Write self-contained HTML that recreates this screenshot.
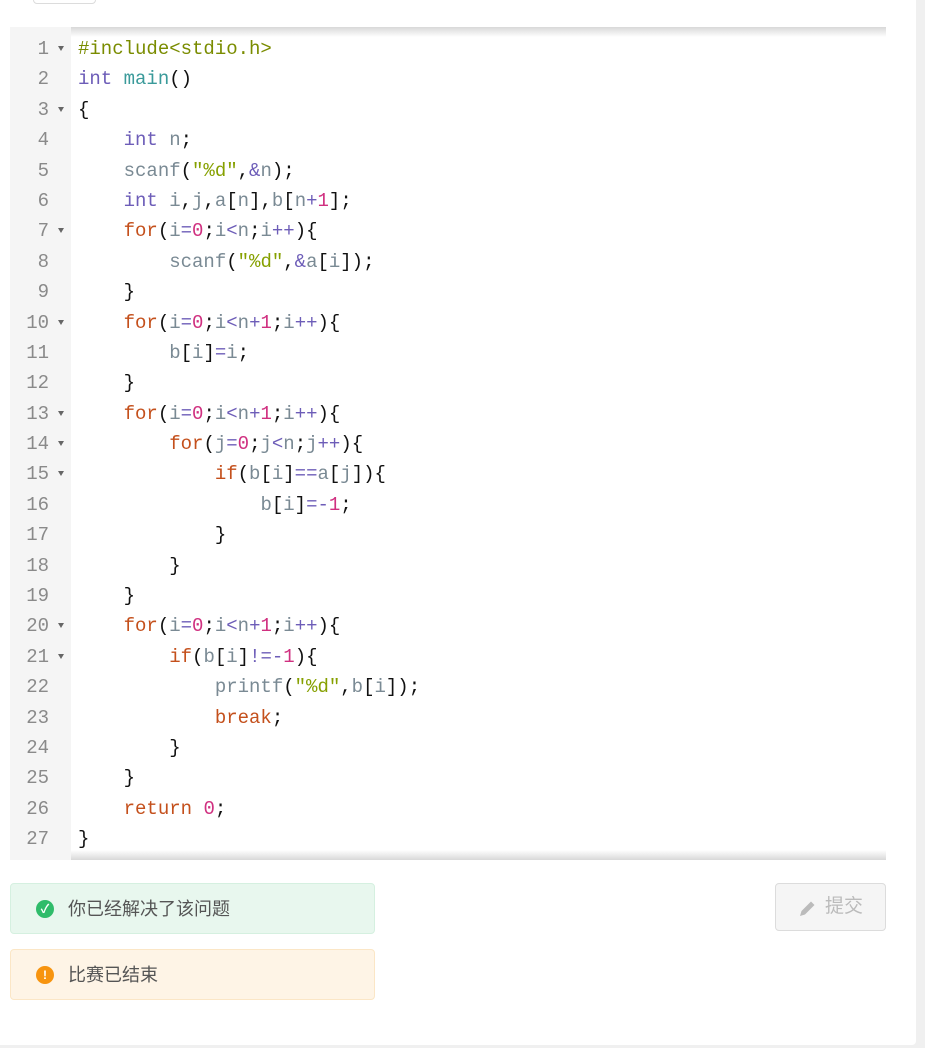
<!DOCTYPE html>
<html><head><meta charset="utf-8"><style>
*{margin:0;padding:0;box-sizing:border-box}
body{width:925px;height:1048px;background:#f0f0f0;position:relative;overflow:hidden;font-family:"Liberation Sans","Noto Sans CJK SC",sans-serif}
.card{position:absolute;left:0;top:0;width:916px;height:1045px;background:#fff;border-radius:0 0 4px 0}
.topbtn{position:absolute;left:33px;top:-6px;width:63px;height:10px;border:1px solid #dcdcdc;border-radius:4px;background:#fff}
.ed{position:absolute;left:10px;top:27px;width:876px;height:833px;background:#fff;overflow:hidden}
.gut{position:absolute;left:0;top:0;width:61px;height:100%;background:#f5f5f5}
.sh{position:absolute;left:0;right:0;height:10px}
.sht{top:0;background:linear-gradient(#d8d8d8,rgba(255,255,255,0))}
.shb{bottom:0;background:linear-gradient(rgba(255,255,255,0),#d8d8d8)}
.lines{position:absolute;left:0;top:7px;font-family:"Liberation Mono",monospace;font-size:19px}
.l{height:30.4px;line-height:30.4px;position:relative;white-space:pre}
.n{position:absolute;left:0;width:39px;text-align:right;color:#8a8a8a}
.a{position:absolute;left:48px;top:12px;width:0;height:0;border-left:3.5px solid transparent;border-right:3.5px solid transparent;border-top:5px solid #666}
.c{position:absolute;left:68px;color:#111}
.p{color:#7a8c00}.t{color:#6d5db8}.f{color:#3a9a9a}.k{color:#c4501c}.v{color:#7a8a94}.o{color:#6d5db8}.d{color:#d03080}.s{color:#86a000}
.al{position:absolute;left:10px;width:365px;height:51px;border-radius:4px;font-size:18px;color:#555;line-height:51px;padding-left:57px}
.ok{top:883px;background:#e8f7ee;border:1px solid #d5f0e0}
.wa{top:949px;background:#fef4e6;border:1px solid #fbe6c6}
.ic{position:absolute;left:25px;top:16px;width:18px;height:18px;border-radius:50%;color:#fff;font-size:12px;line-height:18px;text-align:center;font-weight:bold}
.btn{position:absolute;left:775px;top:883px;width:111px;height:48px;border:1px solid #dcdcdc;border-radius:4px;background:#f5f5f5;color:#bbb;font-size:19px;line-height:46px;padding-left:49px}
</style></head><body>
<div class="card">
<div class="topbtn"></div>
<div class="ed"><div class="gut"></div>
<div class="lines">
<div class="l"><span class="n">1</span><span class="a"></span><span class="c"><span class="p">#include&lt;stdio.h&gt;</span></span></div>
<div class="l"><span class="n">2</span><span class="c"><span class="t">int</span> <span class="f">main</span>()</span></div>
<div class="l"><span class="n">3</span><span class="a"></span><span class="c">{</span></div>
<div class="l"><span class="n">4</span><span class="c">    <span class="t">int</span> <span class="v">n</span>;</span></div>
<div class="l"><span class="n">5</span><span class="c">    <span class="v">scanf</span>(<span class="s">"%d"</span>,<span class="o">&amp;</span><span class="v">n</span>);</span></div>
<div class="l"><span class="n">6</span><span class="c">    <span class="t">int</span> <span class="v">i</span>,<span class="v">j</span>,<span class="v">a</span>[<span class="v">n</span>],<span class="v">b</span>[<span class="v">n</span><span class="o">+</span><span class="d">1</span>];</span></div>
<div class="l"><span class="n">7</span><span class="a"></span><span class="c">    <span class="k">for</span>(<span class="v">i</span><span class="o">=</span><span class="d">0</span>;<span class="v">i</span><span class="o">&lt;</span><span class="v">n</span>;<span class="v">i</span><span class="o">++</span>){</span></div>
<div class="l"><span class="n">8</span><span class="c">        <span class="v">scanf</span>(<span class="s">"%d"</span>,<span class="o">&amp;</span><span class="v">a</span>[<span class="v">i</span>]);</span></div>
<div class="l"><span class="n">9</span><span class="c">    }</span></div>
<div class="l"><span class="n">10</span><span class="a"></span><span class="c">    <span class="k">for</span>(<span class="v">i</span><span class="o">=</span><span class="d">0</span>;<span class="v">i</span><span class="o">&lt;</span><span class="v">n</span><span class="o">+</span><span class="d">1</span>;<span class="v">i</span><span class="o">++</span>){</span></div>
<div class="l"><span class="n">11</span><span class="c">        <span class="v">b</span>[<span class="v">i</span>]<span class="o">=</span><span class="v">i</span>;</span></div>
<div class="l"><span class="n">12</span><span class="c">    }</span></div>
<div class="l"><span class="n">13</span><span class="a"></span><span class="c">    <span class="k">for</span>(<span class="v">i</span><span class="o">=</span><span class="d">0</span>;<span class="v">i</span><span class="o">&lt;</span><span class="v">n</span><span class="o">+</span><span class="d">1</span>;<span class="v">i</span><span class="o">++</span>){</span></div>
<div class="l"><span class="n">14</span><span class="a"></span><span class="c">        <span class="k">for</span>(<span class="v">j</span><span class="o">=</span><span class="d">0</span>;<span class="v">j</span><span class="o">&lt;</span><span class="v">n</span>;<span class="v">j</span><span class="o">++</span>){</span></div>
<div class="l"><span class="n">15</span><span class="a"></span><span class="c">            <span class="k">if</span>(<span class="v">b</span>[<span class="v">i</span>]<span class="o">==</span><span class="v">a</span>[<span class="v">j</span>]){</span></div>
<div class="l"><span class="n">16</span><span class="c">                <span class="v">b</span>[<span class="v">i</span>]<span class="o">=-</span><span class="d">1</span>;</span></div>
<div class="l"><span class="n">17</span><span class="c">            }</span></div>
<div class="l"><span class="n">18</span><span class="c">        }</span></div>
<div class="l"><span class="n">19</span><span class="c">    }</span></div>
<div class="l"><span class="n">20</span><span class="a"></span><span class="c">    <span class="k">for</span>(<span class="v">i</span><span class="o">=</span><span class="d">0</span>;<span class="v">i</span><span class="o">&lt;</span><span class="v">n</span><span class="o">+</span><span class="d">1</span>;<span class="v">i</span><span class="o">++</span>){</span></div>
<div class="l"><span class="n">21</span><span class="a"></span><span class="c">        <span class="k">if</span>(<span class="v">b</span>[<span class="v">i</span>]<span class="o">!=-</span><span class="d">1</span>){</span></div>
<div class="l"><span class="n">22</span><span class="c">            <span class="v">printf</span>(<span class="s">"%d"</span>,<span class="v">b</span>[<span class="v">i</span>]);</span></div>
<div class="l"><span class="n">23</span><span class="c">            <span class="k">break</span>;</span></div>
<div class="l"><span class="n">24</span><span class="c">        }</span></div>
<div class="l"><span class="n">25</span><span class="c">    }</span></div>
<div class="l"><span class="n">26</span><span class="c">    <span class="k">return</span> <span class="d">0</span>;</span></div>
<div class="l"><span class="n">27</span><span class="c">}</span></div>
</div>
<div class="sh sht" style="left:61px"></div><div class="sh shb" style="left:61px"></div>
</div>
<div class="al ok"><span class="ic" style="background:#2fbc6a">✓</span>你已经解决了该问题</div>
<div class="al wa"><span class="ic" style="background:#f7940f">!</span>比赛已结束</div>
<div class="btn"><svg style="position:absolute;left:22px;top:14px" width="20" height="20" viewBox="0 0 20 20"><path d="M2 18 L3.5 13 L13 3.5 L16.5 7 L7 16.5 Z" fill="#bbb"/></svg>提交</div>
</div>
</body></html>
